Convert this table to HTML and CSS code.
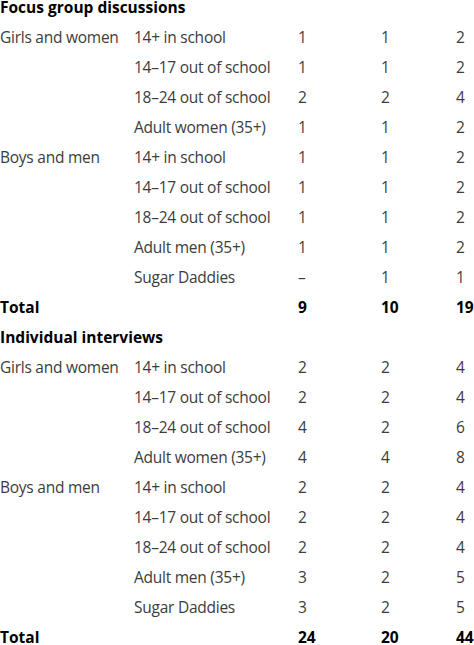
FILE: index.html
```html
<!DOCTYPE html>
<html>
<head>
<meta charset="utf-8">
<link rel="stylesheet" href="styles.css">
</head>
<body>
<div class="table">
  <div class="row section"><span class="c1">Focus group discussions</span></div>
  <div class="row"><span>Girls and women</span><span>14+ in school</span><span>1</span><span>1</span><span>2</span></div>
  <div class="row"><span></span><span>14–17 out of school</span><span>1</span><span>1</span><span>2</span></div>
  <div class="row"><span></span><span>18–24 out of school</span><span>2</span><span>2</span><span>4</span></div>
  <div class="row"><span></span><span>Adult women (35+)</span><span>1</span><span>1</span><span>2</span></div>
  <div class="row"><span>Boys and men</span><span>14+ in school</span><span>1</span><span>1</span><span>2</span></div>
  <div class="row"><span></span><span>14–17 out of school</span><span>1</span><span>1</span><span>2</span></div>
  <div class="row"><span></span><span>18–24 out of school</span><span>1</span><span>1</span><span>2</span></div>
  <div class="row"><span></span><span>Adult men (35+)</span><span>1</span><span>1</span><span>2</span></div>
  <div class="row"><span></span><span>Sugar Daddies</span><span>–</span><span>1</span><span>1</span></div>
  <div class="row total"><span>Total</span><span></span><span>9</span><span>10</span><span>19</span></div>
  <div class="row section"><span class="c1">Individual interviews</span></div>
  <div class="row"><span>Girls and women</span><span>14+ in school</span><span>2</span><span>2</span><span>4</span></div>
  <div class="row"><span></span><span>14–17 out of school</span><span>2</span><span>2</span><span>4</span></div>
  <div class="row"><span></span><span>18–24 out of school</span><span>4</span><span>2</span><span>6</span></div>
  <div class="row"><span></span><span>Adult women (35+)</span><span>4</span><span>4</span><span>8</span></div>
  <div class="row"><span>Boys and men</span><span>14+ in school</span><span>2</span><span>2</span><span>4</span></div>
  <div class="row"><span></span><span>14–17 out of school</span><span>2</span><span>2</span><span>4</span></div>
  <div class="row"><span></span><span>18–24 out of school</span><span>2</span><span>2</span><span>4</span></div>
  <div class="row"><span></span><span>Adult men (35+)</span><span>3</span><span>2</span><span>5</span></div>
  <div class="row"><span></span><span>Sugar Daddies</span><span>3</span><span>2</span><span>5</span></div>
  <div class="row total"><span>Total</span><span></span><span>24</span><span>20</span><span>44</span></div>
</div>
</body>
</html>
```

FILE: styles.css
```css
html, body {
  margin: 0;
  padding: 0;
  background: #fff;
  overflow: hidden;
}
body {
  font-family: "Open Sans", "Liberation Sans", sans-serif;
  font-size: 15.5px;
  letter-spacing: -0.25px;
  color: #3c3c3c;
  width: 474px;
  height: 645px;
}
.table {
  margin-top: -8px;
}
.row {
  display: grid;
  grid-template-columns: 134px 164px 83px 75px auto;
  height: 30px;
  line-height: 30px;
  white-space: nowrap;
}
.section {
  display: block;
  font-weight: 700;
  color: #000;
  letter-spacing: 0;
}
.total {
  font-weight: 700;
  color: #000;
  letter-spacing: 0;
}
```
